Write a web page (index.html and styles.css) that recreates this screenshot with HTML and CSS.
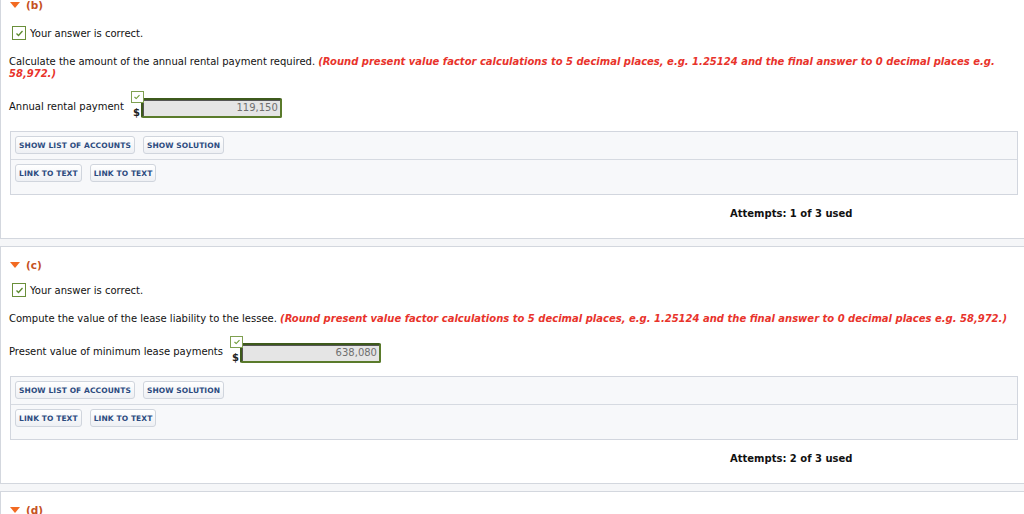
FILE: index.html
```html
<!DOCTYPE html>
<html>
<head>
<meta charset="utf-8">
<link rel="stylesheet" href="styles.css">
</head>
<body>
<div class="page">
  <section class="part part-first">
    <div class="part-head"><span class="tri"></span><span class="part-label">(b)</span></div>
    <div class="correct"><span class="cbox"><svg width="11" height="11" viewBox="0 0 11 11"><path d="M2.5 5.5 L4.5 7.5 L8.5 3" fill="none" stroke="#5c8a2e" stroke-width="1.3"/></svg></span><span>Your answer is correct.</span></div>
    <p class="question">Calculate the amount of the annual rental payment required. <span class="hint">(Round present value factor calculations to 5 decimal places, e.g. 1.25124 and the final answer to 0 decimal places e.g. 58,972.)</span></p>
    <div class="answer">
      <span class="answer-label">Annual rental payment</span>
      <span class="field">
        <span class="mini-check"><svg width="10" height="8" viewBox="0 0 10 8"><path d="M2.5 4 L4.2 5.6 L7.5 2.2" fill="none" stroke="#6c9a34" stroke-width="1.1"/></svg></span>
        <span class="dollar">$</span>
        <span class="input">119,150</span>
      </span>
    </div>
    <div class="tools">
      <div class="tools-row"><span class="btn">Show List of Accounts</span><span class="btn">Show Solution</span></div>
      <div class="tools-row tools-row-2"><span class="btn">Link to Text</span><span class="btn">Link to Text</span></div>
    </div>
    <div class="attempts">Attempts: 1 of 3 used</div>
  </section>

  <section class="part">
    <div class="part-head"><span class="tri"></span><span class="part-label">(c)</span></div>
    <div class="correct"><span class="cbox"><svg width="11" height="11" viewBox="0 0 11 11"><path d="M2.5 5.5 L4.5 7.5 L8.5 3" fill="none" stroke="#5c8a2e" stroke-width="1.3"/></svg></span><span>Your answer is correct.</span></div>
    <p class="question">Compute the value of the lease liability to the lessee. <span class="hint">(Round present value factor calculations to 5 decimal places, e.g. 1.25124 and the final answer to 0 decimal places e.g. 58,972.)</span></p>
    <div class="answer">
      <span class="answer-label">Present value of minimum lease payments</span>
      <span class="field">
        <span class="mini-check"><svg width="10" height="8" viewBox="0 0 10 8"><path d="M2.5 4 L4.2 5.6 L7.5 2.2" fill="none" stroke="#6c9a34" stroke-width="1.1"/></svg></span>
        <span class="dollar">$</span>
        <span class="input">638,080</span>
      </span>
    </div>
    <div class="tools">
      <div class="tools-row"><span class="btn">Show List of Accounts</span><span class="btn">Show Solution</span></div>
      <div class="tools-row tools-row-2"><span class="btn">Link to Text</span><span class="btn">Link to Text</span></div>
    </div>
    <div class="attempts">Attempts: 2 of 3 used</div>
  </section>

  <section class="part">
    <div class="part-head"><span class="tri"></span><span class="part-label">(d)</span></div>
  </section>
</div>
</body>
</html>
```

FILE: styles.css
```css
html, body {
  margin: 0;
  padding: 0;
}
body {
  background: #f5f6f8;
  font-family: "DejaVu Sans", Verdana, sans-serif;
  font-size: 10px;
  color: #111;
  overflow: hidden;
}
.page {
  width: 1030px;
}
.part {
  background: #fff;
  border-top: 1px solid #d3d7de;
  border-bottom: 1px solid #d3d7de;
  border-left: 1px solid #d3d7de;
  padding: 11px 0 0 8px;
  margin-bottom: 7px;
  height: 238px;
  box-sizing: border-box;
}
.part-first {
  border-top: none;
  padding-top: 0;
  margin-top: -2px;
  height: 241px;
}
.part-head {
  display: flex;
  align-items: center;
  height: 14px;
  gap: 6px;
  padding-left: 1px;
}
.tri {
  width: 0;
  height: 0;
  border-left: 5.5px solid transparent;
  border-right: 5.5px solid transparent;
  border-top: 6px solid #f26a22;
}
.part-label {
  font-weight: bold;
  color: #c5521f;
  font-size: 10.5px;
}
.correct {
  display: flex;
  align-items: center;
  gap: 4px;
  margin-top: 11px;
  padding-left: 3px;
  height: 14px;
}
.part-first .correct {
  margin-top: 14px;
}
.cbox {
  width: 12px;
  height: 12px;
  border: 1px solid #6a8f3a;
  background: #fff;
  display: flex;
  align-items: center;
  justify-content: center;
}
.question {
  margin: 16px 0 0 0;
  line-height: 12px;
  width: 1000px;
}
.hint {
  color: #e8332b;
  font-weight: bold;
  font-style: italic;
}
.answer {
  display: flex;
  align-items: center;
  margin-top: 12px;
  height: 26px;
}
.answer-label {
  margin-right: 9px;
  margin-top: 2px;
}
.field {
  position: relative;
  display: flex;
  align-items: flex-end;
  padding-top: 6px;
}
.mini-check {
  position: absolute;
  left: -2px;
  top: -1px;
  width: 11px;
  height: 10px;
  border: 1px solid #7fa050;
  background: #fff;
  display: flex;
  align-items: center;
  justify-content: center;
  z-index: 2;
}
.dollar {
  font-size: 10px;
  line-height: 10px;
  margin-right: 1px;
  font-weight: bold;
  color: #222;
}
.input {
  width: 135px;
  height: 16px;
  border: 2px solid #5a7b2b;
  border-top-color: #3e5a1c;
  border-left-color: #3e5a1c;
  border-radius: 2px;
  background: #e5e5e5;
  color: #6f6f6f;
  text-align: right;
  padding-right: 2px;
  line-height: 16px;
  box-shadow: inset 1px 1px 0 #555;
}
.tools {
  margin-top: 13px;
  margin-left: 1px;
  width: 1006px;
  border: 1px solid #d2d6de;
  background: #f7f8fa;
}
.tools-row {
  display: flex;
  gap: 8px;
  padding: 4px 4px 5px 4px;
  height: 18px;
}
.tools-row-2 {
  border-top: 1px solid #d6dae1;
  padding: 4px 4px 12px 4px;
}
.btn {
  display: flex;
  align-items: center;
  padding: 0 3px;
  height: 16px;
  border: 1px solid #d0d5dd;
  border-radius: 3px;
  background: linear-gradient(#ffffff, #eef0f4);
  color: #2c4b7f;
  font-weight: bold;
  font-size: 7.5px;
  text-transform: uppercase;
  letter-spacing: 0.1px;
}
.attempts {
  margin-top: 12px;
  padding-left: 721px;
  font-weight: bold;
  line-height: 14px;
}
```
